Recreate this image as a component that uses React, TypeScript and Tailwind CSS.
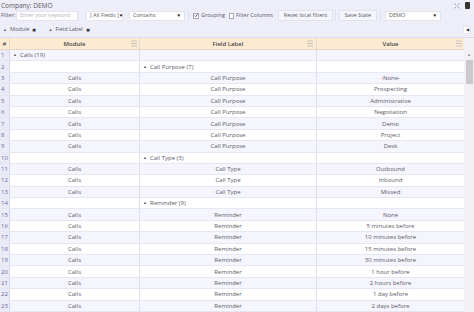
import React from 'react';

type Row =
  | { kind: 'group'; level: 1 | 2; label: string }
  | { kind: 'data'; module: string; field: string; value: string };

const rows: Row[] = [
  { kind: 'group', level: 1, label: 'Calls (19)' },
  { kind: 'group', level: 2, label: 'Call Purpose (7)' },
  ...['-None-', 'Prospecting', 'Administrative', 'Negotiation', 'Demo', 'Project', 'Desk'].map(
    (v) => ({ kind: 'data' as const, module: 'Calls', field: 'Call Purpose', value: v })
  ),
  { kind: 'group', level: 2, label: 'Call Type (3)' },
  ...['Outbound', 'Inbound', 'Missed'].map((v) => ({
    kind: 'data' as const,
    module: 'Calls',
    field: 'Call Type',
    value: v,
  })),
  { kind: 'group', level: 2, label: 'Reminder (9)' },
  ...[
    'None',
    '5 minutes before',
    '10 minutes before',
    '15 minutes before',
    '30 minutes before',
    '1 hour before',
    '2 hours before',
    '1 day before',
    '2 days before',
  ].map((v) => ({ kind: 'data' as const, module: 'Calls', field: 'Reminder', value: v })),
];

function MenuIcon() {
  return (
    <svg width="6" height="7" viewBox="0 0 6 7" className="shrink-0">
      <path d="M0 1h6M0 3.5h6M0 6h6" stroke="#a4a4b0" strokeWidth="0.6" />
    </svg>
  );
}

function Select({ label, width }: { label: string; width: string }) {
  return (
    <div className={`${width} h-[10px] shrink-0 bg-white border border-[#e4e4f0] flex items-center justify-between px-[3px] whitespace-nowrap`}>
      <span>{label}</span>
      <span className="text-[4.5px] text-black">▼</span>
    </div>
  );
}

function Check({ checked, label }: { checked: boolean; label: string }) {
  return (
    <div className="flex items-center gap-[2px] whitespace-nowrap">
      <div className="w-[6px] h-[6px] border border-[#a8a8b8] bg-white flex items-center justify-center">
        {checked && (
          <svg width="5" height="5" viewBox="0 0 5 5">
            <path d="M0.6 2.6L2 4L4.5 0.8" stroke="#333" strokeWidth="0.9" fill="none" />
          </svg>
        )}
      </div>
      <span>{label}</span>
    </div>
  );
}

function Tag({ label }: { label: string }) {
  return (
    <div className="h-[10px] px-[2px] flex items-center gap-[3px] whitespace-nowrap">
      <span className="text-[4px]">▲</span>
      <span>{label}</span>
      <span className="text-[5px] text-[#222]">✖</span>
    </div>
  );
}

export default function App() {
  return (
    <div
      className="w-[474px] h-[312px] overflow-hidden bg-[#eeeef9] text-[#5a5a66] flex flex-col"
      style={{ fontFamily: '"Open Sans", "Noto Sans", sans-serif' }}
    >
      {/* title */}
      <div className="h-[8px] shrink-0 flex items-end justify-between px-[1px] text-[6.5px] leading-none">
        <span className="-mb-[1px]">Company: DEMO</span>
        <div className="flex items-center gap-[5px] pr-[3px] -mb-[1px]">
          <svg width="6" height="6" viewBox="0 0 6 6">
            <path d="M0.5 0.5L2.3 2.3M5.5 0.5L3.7 2.3M0.5 5.5L2.3 3.7M5.5 5.5L3.7 3.7" stroke="#888" strokeWidth="0.8" />
          </svg>
          <div className="w-[5px] h-[7px] rounded-[1px] bg-[#333]" />
        </div>
      </div>

      {/* toolbar */}
      <div className="h-[15px] shrink-0 flex items-center text-[5.5px] leading-none pl-[1px] whitespace-nowrap">
        <span className="w-[14px]">Filter:</span>
        <div className="ml-[1px] w-[62px] h-[10px] shrink-0 bg-white border border-[#e4e4f0] flex items-center px-[3px] text-[#b4b4c0]">
          Enter your keyword
        </div>
        <div className="ml-[8px]">
          <Select label="[ All Fields ]" width="w-[37px]" />
        </div>
        <div className="ml-[6px]">
          <Select label="Contains" width="w-[56px]" />
        </div>
        <div className="ml-[3px] w-px h-[11px] bg-[#e2e2ee]" />
        <div className="ml-[4px] w-[33px]">
          <Check checked label="Grouping" />
        </div>
        <div className="ml-[3px] w-[44px]">
          <Check checked={false} label="Filter Columns" />
        </div>
        <div className="ml-[5px] w-[55px] h-[11px] shrink-0 flex items-center justify-center bg-[#f5f5fc] border border-[#e2e2f0]">
          Reset local filters
        </div>
        <div className="ml-[2px] w-px h-[11px] bg-[#e2e2ee]" />
        <div className="ml-[3px] w-[38px] h-[11px] shrink-0 flex items-center justify-center bg-[#f5f5fc] border border-[#e2e2f0]">
          Save State
        </div>
        <div className="ml-[3px] w-px h-[11px] bg-[#e2e2ee]" />
        <div className="ml-[4px]">
          <Select label="DEMO" width="w-[56px]" />
        </div>
      </div>

      {/* group tags */}
      <div className="h-[14px] shrink-0 flex items-center gap-[8px] pl-[1px] pr-[3px] text-[5.5px] leading-none">
        <Tag label="Module" />
        <Tag label="Field Label" />
        <div className="ml-auto w-[8px] h-[8px] bg-white border border-[#e2e2f0] flex items-center justify-center text-[4px] text-[#222]">
          ◀
        </div>
      </div>

      {/* grid */}
      <div className="flex-1 flex min-h-0 border-t border-[#dcdcee]">
        <div className="w-[464px] flex flex-col text-[6px] leading-none">
          <div className="h-[12px] shrink-0 flex bg-[#fcebd2] border-b border-[#e2d6c4] text-[#444] font-semibold">
            <div className="w-[10px] flex items-center justify-center border-r border-[#e4d8c8] font-normal">#</div>
            <div className="w-[130px] flex items-center justify-center relative border-r border-[#e4d8c8]">
              Module
              <span className="absolute right-[2px]"><MenuIcon /></span>
            </div>
            <div className="w-[177px] flex items-center justify-center relative border-r border-[#e4d8c8]">
              Field Label
              <span className="absolute right-[3px]"><MenuIcon /></span>
            </div>
            <div className="flex-1 flex items-center justify-center relative">
              Value
              <span className="absolute right-[2px]"><MenuIcon /></span>
            </div>
          </div>
          {rows.map((r, i) => (
            <div
              key={i}
              className={`h-[11.4px] shrink-0 flex border-b border-[#e6e6f4] ${i % 2 === 0 ? 'bg-[#f5f5fd]' : 'bg-white'}`}
            >
              <div className="w-[10px] flex items-center pl-[1px] bg-[#ebebf8] border-r border-[#d6d6ec] text-[#6a6aa0]">
                {i + 1}
              </div>
              <div className="w-[130px] flex items-center justify-center relative border-r border-[#e0e0f2]">
                {r.kind === 'group' && r.level === 1 && (
                  <span className="absolute left-[3px] flex items-center gap-[3px]">
                    <span className="text-[4px]">▲</span>
                    {r.label}
                  </span>
                )}
                {r.kind === 'data' && r.module}
              </div>
              <div className="w-[177px] flex items-center justify-center relative border-r border-[#e0e0f2]">
                {r.kind === 'group' && r.level === 2 && (
                  <span className="absolute left-[3px] flex items-center gap-[3px]">
                    <span className="text-[4px]">▲</span>
                    {r.label}
                  </span>
                )}
                {r.kind === 'data' && r.field}
              </div>
              <div className="flex-1 flex items-center justify-center">{r.kind === 'data' && r.value}</div>
            </div>
          ))}
          <div className="flex-1 flex bg-[#f5f5fd]">
            <div className="w-[10px] bg-[#ebebf8] border-r border-[#d6d6ec]" />
            <div className="w-[130px] border-r border-[#e0e0f2]" />
            <div className="w-[177px] border-r border-[#e0e0f2]" />
          </div>
        </div>
        {/* scrollbar */}
        <div className="w-[10px] shrink-0 flex flex-col items-center bg-[#f1f1f4] pt-[12px]">
          <span className="text-[4px] text-[#888] mt-[2px]">▲</span>
          <div className="mt-[2px] w-[7px] h-[24px] bg-[#c9c9cf]" />
        </div>
      </div>
    </div>
  );
}
